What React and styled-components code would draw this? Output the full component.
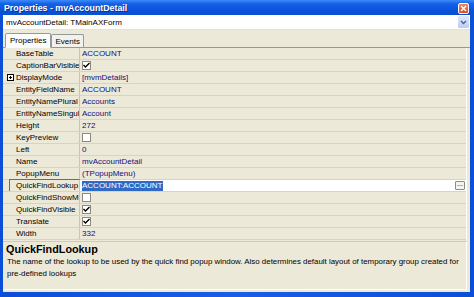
import React from 'react';
import styled, { createGlobalStyle } from 'styled-components';

const GlobalStyle = createGlobalStyle`
	html, body {
		margin: 0;
		padding: 0;
		background: #ffffff;
	}
	body {
		font-family: "Liberation Sans", Arial, sans-serif;
	}
`;

const Window = styled.div`
	width: 474px;
	height: 297px;
	box-sizing: border-box;
	display: flex;
	flex-direction: column;
	background: linear-gradient(90deg, #0b4fd6 0%, #1a5ee6 50%, #0b4fd6 100%);
	padding: 0 4px 5px 3px;
	overflow: hidden;
`;

const TitleBar = styled.div`
	height: 15px;
	margin: 0 -4px 0 -3px;
	padding: 0 5px 0 4px;
	display: flex;
	align-items: center;
	justify-content: space-between;
	background: linear-gradient(180deg, #3c8cf8 0%, #1660e8 25%, #0a52dc 70%, #0b4fd0 100%);
`;

const Title = styled.span`
	color: #ffffff;
	font-weight: bold;
	font-size: 8.8px;
	text-shadow: 1px 1px 0 #0a2f8a;
`;

const CloseButton = styled.div`
	width: 9px;
	height: 9px;
	margin-top: 1px;
	border: 1px solid #ffffff;
	border-radius: 2px;
	background: linear-gradient(180deg, #e98a6a 0%, #d64a26 100%);
	display: flex;
	align-items: center;
	justify-content: center;
`;

const Client = styled.div`
	flex: 1;
	display: flex;
	flex-direction: column;
	background: #ece9d8;
`;

const Combo = styled.div`
	height: 15px;
	box-sizing: border-box;
	display: flex;
	align-items: center;
	justify-content: space-between;
	background: #ffffff;
	border-bottom: 1px solid #e4e2d6;
	padding: 0 1px 0 3px;
	font-size: 8px;
	color: #000000;
`;

const DropButton = styled.div`
	width: 11px;
	height: 12px;
	border-radius: 1px;
	background: linear-gradient(180deg, #dfe8fc 0%, #b9cdf6 100%);
	display: flex;
	align-items: center;
	justify-content: center;
`;

const TabStrip = styled.div`
	height: 17px;
	display: flex;
	align-items: flex-end;
	padding-left: 2px;
	padding-right: 4px;
	border-bottom: 1px solid #919b9c;
`;

const Tab = styled.div`
	height: ${props => (props.active ? '15px' : '13px')};
	box-sizing: border-box;
	padding: 0 ${props => (props.active ? '4px' : '3px')};
	display: flex;
	align-items: center;
	font-size: 8px;
	color: #000000;
	background: ${props => (props.active ? '#fcfcfe' : '#f2f1ec')};
	border: 1px solid #919b9c;
	border-bottom: ${props => (props.active ? '1px solid #fcfcfe' : 'none')};
	margin-bottom: ${props => (props.active ? '-1px' : '0')};
	border-radius: 2px 2px 0 0;
`;

const Grid = styled.div`
	display: flex;
	flex-direction: column;
	margin-right: 3px;
	border-right: 1px solid #ffffff;
`;

const Row = styled.div`
	height: 12px;
	box-sizing: border-box;
	display: grid;
	grid-template-columns: 12px 65px 1fr;
	border-bottom: 1px solid #d8d4c4;
	font-size: 8px;
	line-height: 11px;
`;

const Gutter = styled.div`
	display: flex;
	align-items: center;
	padding-left: 4px;
`;

const Expand = styled.div`
	width: 5px;
	height: 5px;
	border: 1px solid #000000;
	position: relative;
	background: #ffffff;
	&::before {
		content: '';
		position: absolute;
		left: 1px;
		top: 2px;
		width: 3px;
		height: 1px;
		background: #000000;
	}
	&::after {
		content: '';
		position: absolute;
		left: 2px;
		top: 1px;
		width: 1px;
		height: 3px;
		background: #000000;
	}
`;

const NameCell = styled.div`
	padding-left: 1px;
	white-space: nowrap;
	overflow: hidden;
	color: #000000;
	border-right: 1px solid #c8c4b4;
	${props =>
		props.selected &&
		`
		border-top: 1px solid #6e6c62;
		border-left: 1px solid #6e6c62;
		margin-top: -1px;
		margin-left: -6px;
		padding-left: 6px;
	`}
`;

const ValueCell = styled.div`
	padding-left: 2px;
	display: flex;
	align-items: center;
	justify-content: space-between;
	white-space: nowrap;
	overflow: hidden;
	color: #10107a;
	background: ${props => (props.selected ? '#ffffff' : 'transparent')};
`;

const Highlight = styled.span`
	background: #316ac5;
	color: #ffffff;
	line-height: 10px;
	padding-right: 1px;
`;

const Check = styled.div`
	width: 9px;
	height: 9px;
	box-sizing: border-box;
	background: #ffffff;
	border: 1px solid #8c8a80;
	display: flex;
	align-items: center;
	justify-content: center;
`;

const EllipsisButton = styled.div`
	width: 10px;
	height: 9px;
	margin-right: 1px;
	box-sizing: border-box;
	border: 1px solid #8d8b80;
	border-radius: 1px;
	background: #f4f3ee;
	font-size: 7px;
	line-height: 4px;
	text-align: center;
	color: #000000;
`;

const Description = styled.div`
	flex: 1;
	margin: 1px 3px 2px 0;
	padding: 1px 6px 0 3px;
	border-top: 1px solid #cfcbbb;
	border-right: 1px solid #ffffff;
	border-bottom: 1px solid #ffffff;
`;

const DescTitle = styled.div`
	font-size: 10.8px;
	font-weight: bold;
	color: #000000;
	line-height: 13px;
`;

const DescText = styled.div`
	font-size: 7.9px;
	line-height: 12px;
	color: #000000;
	padding-left: 1px;
`;

const CheckMark = () => (
	<svg width="7" height="7" viewBox="0 0 7 7">
		<path d="M0.5 3 L2.5 5 L6.5 1" stroke="#000000" strokeWidth="1.4" fill="none" />
	</svg>
);

const properties = [
	{ name: 'BaseTable', value: 'ACCOUNT' },
	{ name: 'CaptionBarVisible', check: true },
	{ name: 'DisplayMode', value: '[mvmDetails]', expand: true },
	{ name: 'EntityFieldName', value: 'ACCOUNT' },
	{ name: 'EntityNamePlural', value: 'Accounts' },
	{ name: 'EntityNameSingular', value: 'Account' },
	{ name: 'Height', value: '272' },
	{ name: 'KeyPreview', check: false },
	{ name: 'Left', value: '0' },
	{ name: 'Name', value: 'mvAccountDetail' },
	{ name: 'PopupMenu', value: '(TPopupMenu)' },
	{ name: 'QuickFindLookup', value: 'ACCOUNT:ACCOUNT', selected: true },
	{ name: 'QuickFindShowMode', check: false },
	{ name: 'QuickFindVisible', check: true },
	{ name: 'Translate', check: true },
	{ name: 'Width', value: '332' }
];

const renderValue = prop => {
	if (prop.check !== undefined) {
		return <Check>{prop.check && <CheckMark />}</Check>;
	}
	if (prop.selected) {
		return (
			<>
				<Highlight>{prop.value}</Highlight>
				<EllipsisButton>...</EllipsisButton>
			</>
		);
	}
	return prop.value;
};

export default function App() {
	return (
		<>
			<GlobalStyle />
			<Window>
				<TitleBar>
					<Title>Properties - mvAccountDetail</Title>
					<CloseButton>
						<svg width="7" height="7" viewBox="0 0 7 7">
							<path d="M1 1 L6 6 M6 1 L1 6" stroke="#ffffff" strokeWidth="1.4" />
						</svg>
					</CloseButton>
				</TitleBar>
				<Client>
					<Combo>
						<span>mvAccountDetail: TMainAXForm</span>
						<DropButton>
							<svg width="7" height="5" viewBox="0 0 7 5">
								<path d="M1 1 L3.5 3.5 L6 1" stroke="#4d6185" strokeWidth="1.4" fill="none" />
							</svg>
						</DropButton>
					</Combo>
					<TabStrip>
						<Tab active>Properties</Tab>
						<Tab>Events</Tab>
					</TabStrip>
					<Grid>
						{properties.map(prop => (
							<Row key={prop.name}>
								<Gutter>{prop.expand && <Expand />}</Gutter>
								<NameCell selected={prop.selected}>{prop.name}</NameCell>
								<ValueCell selected={prop.selected}>{renderValue(prop)}</ValueCell>
							</Row>
						))}
					</Grid>
					<Description>
						<DescTitle>QuickFindLookup</DescTitle>
						<DescText>
							The name of the lookup to be used by the quick find popup window. Also determines default
							layout of temporary group created for pre-defined lookups
						</DescText>
					</Description>
				</Client>
			</Window>
		</>
	);
}
